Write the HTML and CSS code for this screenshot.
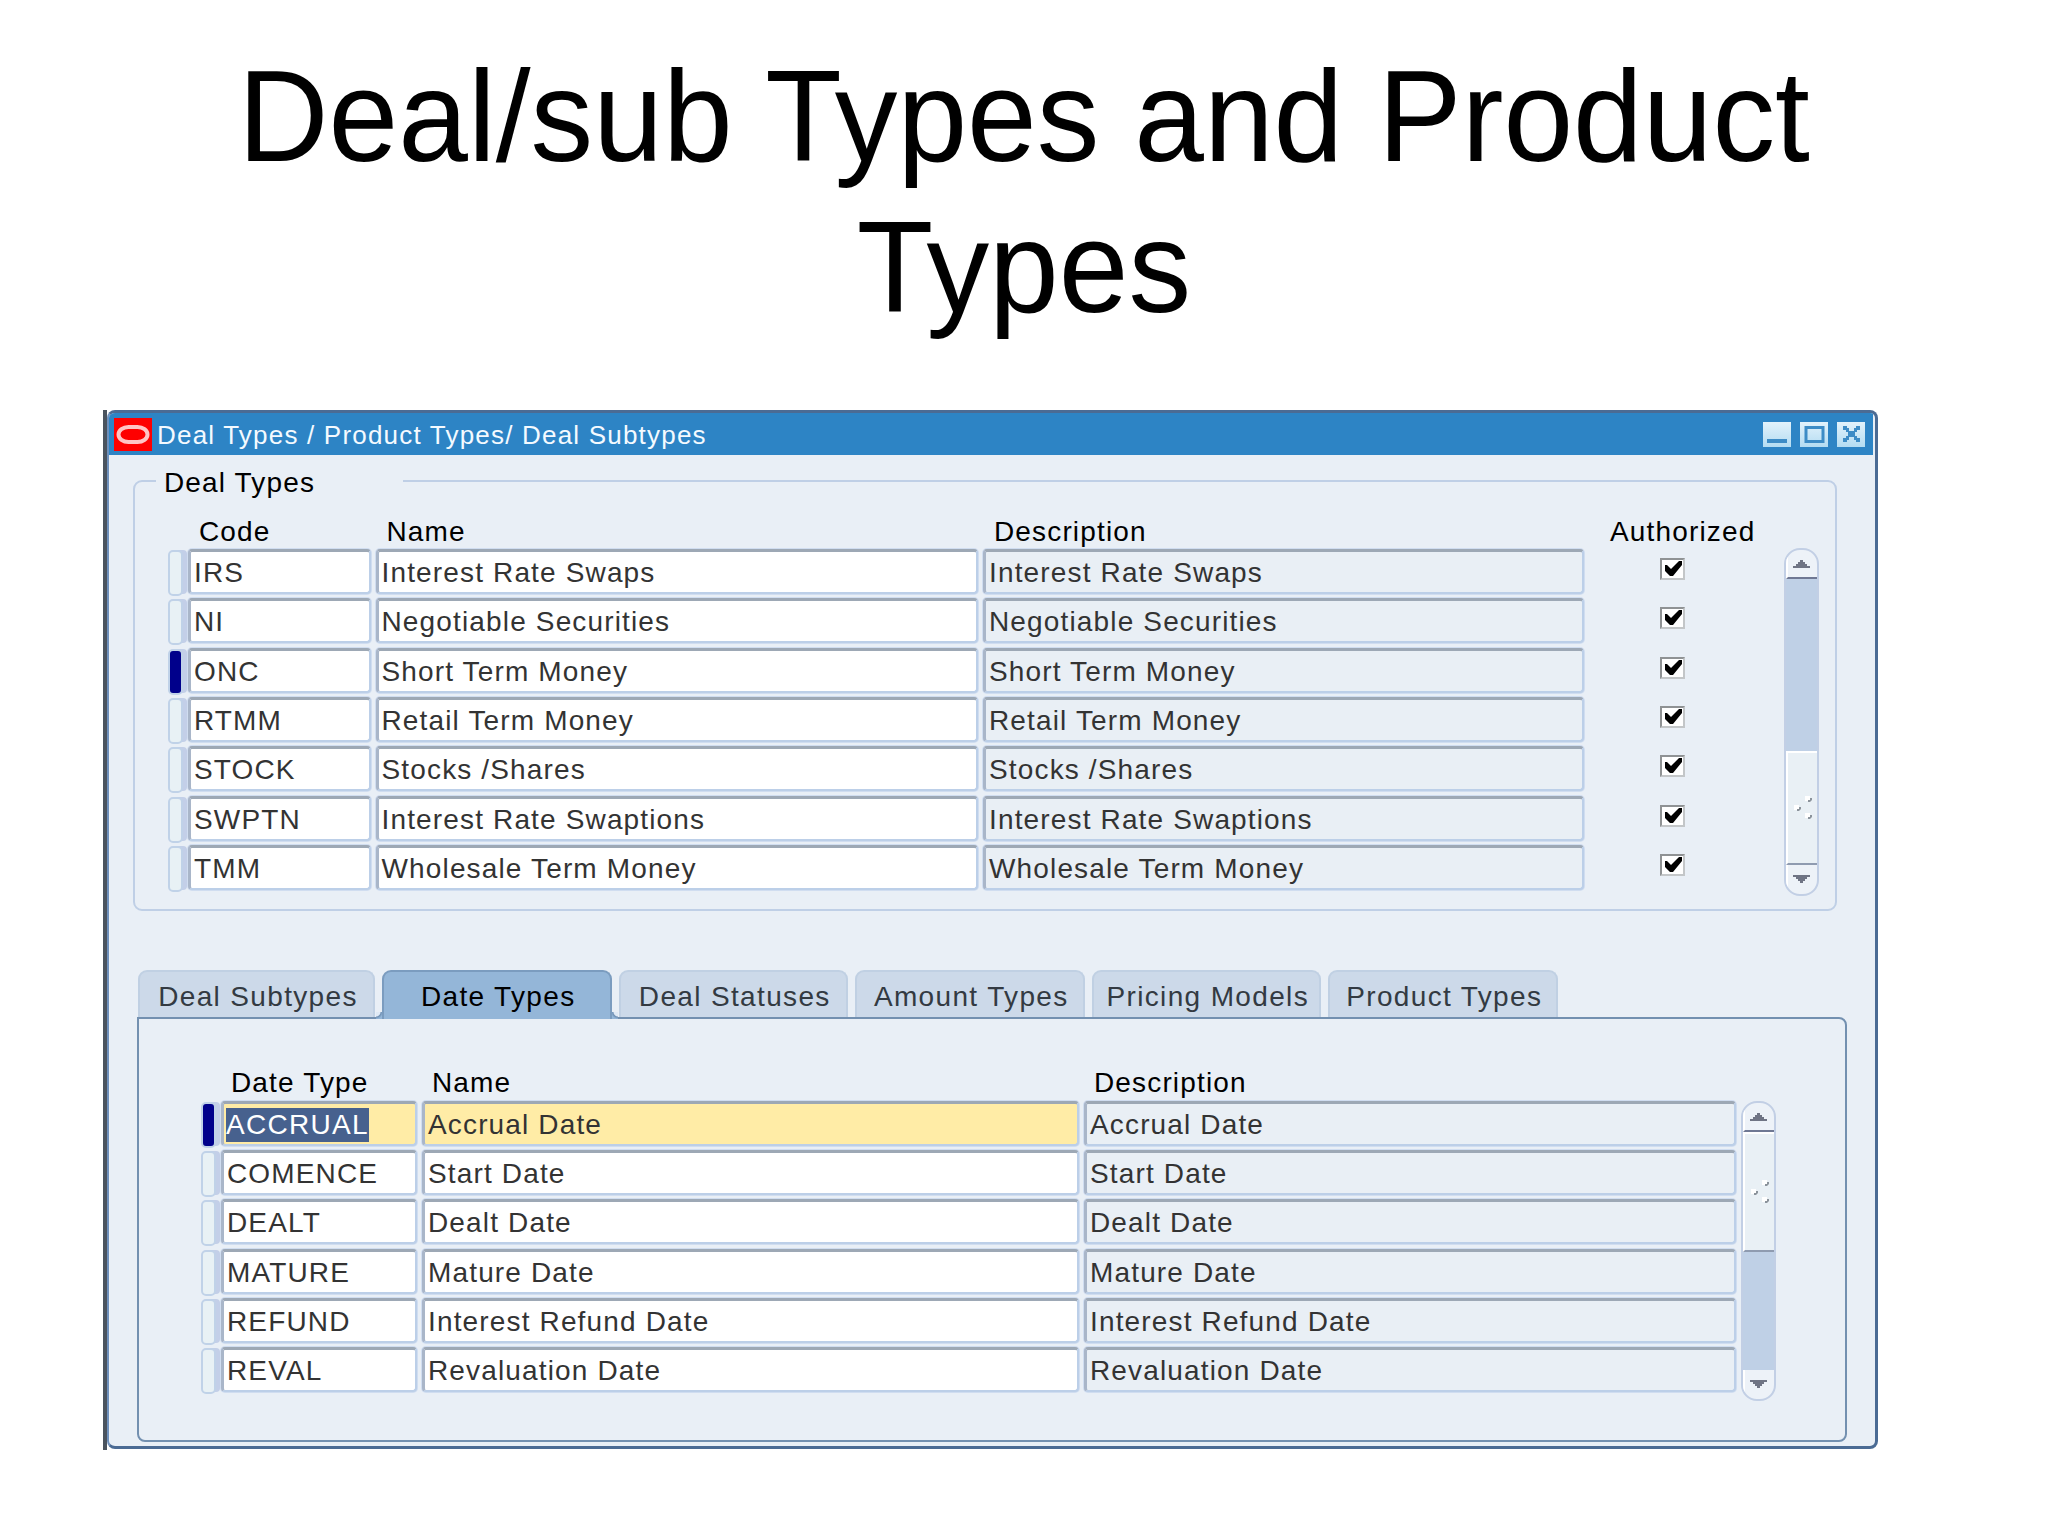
FILE: index.html
```
<!DOCTYPE html>
<html lang="en">
<head>
  <meta charset="UTF-8" />
  <title>Deal/sub Types and Product Types</title>
  <link rel="stylesheet" href="styles.css">
</head>
<body>

  <h1 class="slide-title">Deal/sub Types and Product<br>Types</h1>

  <div class="frame">
    <div class="window">
      <div class="titlebar">
        <svg class="logo" viewBox="0 0 38 33">
          <rect width="38" height="33" fill="#fe0000"/>
          <rect x="4.5" y="9" width="29" height="15" rx="10" ry="7.5" fill="none" stroke="#ffc4c4" stroke-width="4"/>
        </svg>
        <span class="caption">Deal Types / Product Types/ Deal Subtypes</span>
        <div class="win-buttons">
          <svg class="win-btn" viewBox="0 0 28 25"><rect x="4" y="17" width="20" height="4" fill="#3d8cc6"/></svg>
          <svg class="win-btn" viewBox="0 0 28 25"><rect x="6" y="5.5" width="17" height="14" fill="none" stroke="#3d8cc6" stroke-width="3"/></svg>
          <svg class="win-btn" viewBox="0 0 28 25"><path d="M6 4h4v2h2v3h5V6h2V4h4v4h-3v2h-2v4h2v2h3v4h-4v-2h-2v-3h-5v3h-2v2H6v-4h3v-2h2v-4H9V8H6z" fill="#3d8cc6"/></svg>
        </div>
      </div>

      <div class="group">
        <span class="legend">Deal Types</span>
        <div class="block deals">
          <div class="grid">
            <div class="row head"><span></span><span>Code</span><span>Name</span><span>Description</span><span class="auth">Authorized</span></div>
            <div class="row"><i class="mark"></i><div class="field">IRS</div><div class="field">Interest Rate Swaps</div><div class="field ro">Interest Rate Swaps</div><span class="check"><svg viewBox="0 0 17 15"><path d="M0 4h2l4 4 8-8h3v4l-9 11h-3l-5-5z"/></svg></span></div>
            <div class="row"><i class="mark"></i><div class="field">NI</div><div class="field">Negotiable Securities</div><div class="field ro">Negotiable Securities</div><span class="check"><svg viewBox="0 0 17 15"><path d="M0 4h2l4 4 8-8h3v4l-9 11h-3l-5-5z"/></svg></span></div>
            <div class="row"><i class="mark on"></i><div class="field">ONC</div><div class="field">Short Term Money</div><div class="field ro">Short Term Money</div><span class="check"><svg viewBox="0 0 17 15"><path d="M0 4h2l4 4 8-8h3v4l-9 11h-3l-5-5z"/></svg></span></div>
            <div class="row"><i class="mark"></i><div class="field">RTMM</div><div class="field">Retail Term Money</div><div class="field ro">Retail Term Money</div><span class="check"><svg viewBox="0 0 17 15"><path d="M0 4h2l4 4 8-8h3v4l-9 11h-3l-5-5z"/></svg></span></div>
            <div class="row"><i class="mark"></i><div class="field">STOCK</div><div class="field">Stocks /Shares</div><div class="field ro">Stocks /Shares</div><span class="check"><svg viewBox="0 0 17 15"><path d="M0 4h2l4 4 8-8h3v4l-9 11h-3l-5-5z"/></svg></span></div>
            <div class="row"><i class="mark"></i><div class="field">SWPTN</div><div class="field">Interest Rate Swaptions</div><div class="field ro">Interest Rate Swaptions</div><span class="check"><svg viewBox="0 0 17 15"><path d="M0 4h2l4 4 8-8h3v4l-9 11h-3l-5-5z"/></svg></span></div>
            <div class="row"><i class="mark"></i><div class="field">TMM</div><div class="field">Wholesale Term Money</div><div class="field ro">Wholesale Term Money</div><span class="check"><svg viewBox="0 0 17 15"><path d="M0 4h2l4 4 8-8h3v4l-9 11h-3l-5-5z"/></svg></span></div>
          </div>
          <div class="scroll">
            <div class="arrow up"><svg viewBox="0 0 17 8"><path d="M0 8V6h3V4h2V2h2V0h3v2h2v2h2v2h3v2z"/></svg></div>
            <div class="track"></div>
            <div class="thumb"><svg viewBox="0 0 18 24"><path d="M11 0h5v5h-5zM0 9h5v5H0zM11 17h5v5h-5z" fill="#fff"/><path d="M14 4h2V2h2v2l-2 2h-2zM3 13h2v-2h2v2l-2 2H3zM14 21h2v-2h2v2l-2 2h-2z" fill="#8b939b"/></svg></div>
            <div class="arrow down"><svg viewBox="0 0 17 8"><path d="M0 0v2h3v2h2v2h2v2h3V6h2V4h2V2h3V0z"/></svg></div>
          </div>
        </div>
      </div>

      <div class="tabs">
        <div class="tab">Deal Subtypes</div>
        <div class="tab active">Date Types</div>
        <div class="tab">Deal Statuses</div>
        <div class="tab">Amount Types</div>
        <div class="tab">Pricing Models</div>
        <div class="tab">Product Types</div>
      </div>

      <div class="panel">
        <div class="block dates">
          <div class="grid">
            <div class="row head"><span></span><span>Date Type</span><span>Name</span><span>Description</span></div>
            <div class="row current"><i class="mark on"></i><div class="field"><span class="selected">ACCRUAL</span></div><div class="field">Accrual Date</div><div class="field ro">Accrual Date</div></div>
            <div class="row"><i class="mark"></i><div class="field">COMENCE</div><div class="field">Start Date</div><div class="field ro">Start Date</div></div>
            <div class="row"><i class="mark"></i><div class="field">DEALT</div><div class="field">Dealt Date</div><div class="field ro">Dealt Date</div></div>
            <div class="row"><i class="mark"></i><div class="field">MATURE</div><div class="field">Mature Date</div><div class="field ro">Mature Date</div></div>
            <div class="row"><i class="mark"></i><div class="field">REFUND</div><div class="field">Interest Refund Date</div><div class="field ro">Interest Refund Date</div></div>
            <div class="row"><i class="mark"></i><div class="field">REVAL</div><div class="field">Revaluation Date</div><div class="field ro">Revaluation Date</div></div>
          </div>
          <div class="scroll">
            <div class="arrow up"><svg viewBox="0 0 17 8"><path d="M0 8V6h3V4h2V2h2V0h3v2h2v2h2v2h3v2z"/></svg></div>
            <div class="thumb"><svg viewBox="0 0 18 24"><path d="M11 0h5v5h-5zM0 9h5v5H0zM11 17h5v5h-5z" fill="#fff"/><path d="M14 4h2V2h2v2l-2 2h-2zM3 13h2v-2h2v2l-2 2H3zM14 21h2v-2h2v2l-2 2h-2z" fill="#8b939b"/></svg></div>
            <div class="track"></div>
            <div class="arrow down"><svg viewBox="0 0 17 8"><path d="M0 0v2h3v2h2v2h2v2h3V6h2V4h2V2h3V0z"/></svg></div>
          </div>
        </div>
      </div>
    </div>
  </div>

</body>
</html>
```
FILE: styles.css
```
* {
  box-sizing: border-box;
}

body {
  margin: 0;
  width: 2048px;
  height: 1536px;
  overflow: hidden;
  background: #fff;
  font-family: "Liberation Sans", Arial, sans-serif;
  color: #000;
}

.slide-title {
  margin: 0;
  padding-top: 40px;
  height: 410px;
  font-size: 125.3px;
  font-weight: normal;
  line-height: 144.6px;
  text-align: center;
  transform: scaleY(1.04);
  transform-origin: top;
}

.frame {
  margin-left: 103px;
  width: 1775px;
  height: 1040px;
  border-left: 4px solid #4a535e;
}

.window {
  height: 1039px;
  border: 3px solid #4b6b94;
  border-left: 2px solid #6e90bc;
  border-radius: 8px;
  background: #e9eff6;
  font-size: 28px;
  letter-spacing: 1.15px;
  overflow: hidden;
  white-space: nowrap;
}

/* title bar */
.titlebar {
  height: 42px;
  display: flex;
  align-items: center;
  padding: 0 8px 0 5px;
  margin-right: 2px;
  background: #2d84c5;
}

.logo {
  width: 38px;
  height: 33px;
}

.caption {
  margin-left: 5px;
  padding-top: 2px;
  font-size: 26px;
  letter-spacing: 1.2px;
  color: #f4faff;
}

.win-buttons {
  margin-left: auto;
  display: flex;
  gap: 9px;
}

.win-btn {
  width: 28px;
  height: 25px;
  background: linear-gradient(#e2f2fb, #b4dcf2);
}

/* Deal Types group */
.group {
  margin: 25px 0 0 24px;
  width: 1704px;
  height: 431px;
  border: 2px solid #bfcfe6;
  border-radius: 9px;
}

.legend {
  display: block;
  margin: -6px 0 0 21px;
  padding-left: 8px;
  width: 247px;
  height: 36px;
  line-height: 14px;
  background: #e9eff6;
}

.block {
  display: flex;
}

.row {
  display: grid;
  height: 45px;
  margin-bottom: 4.35px;
}

.deals {
  padding-left: 33px;
}

.deals .row {
  grid-template-columns: 20px 187.5px 607.5px 606px 190px;
}

.head {
  line-height: 39px;
  height: 36px;
  margin-bottom: 1px;
}

.head span {
  padding-left: 11px;
}

.deals .auth {
  padding-left: 21px;
}

.mark {
  width: 15px;
  height: 46px;
  margin-top: 1px;
  border: 2px solid #c0d2e8;
  border-radius: 5px;
  background: #e8f1f5;
  box-shadow: 5px -1px 0 -1px #c3cfe8;
}

.mark.on {
  background: #00008b;
}

.field {
  height: 45px;
  margin-right: 5px;
  padding-left: 3px;
  border: 2px solid #bccfe8;
  border-top: 3px solid #9da8b5;
  border-left: 3px solid #a9b6c9;
  border-radius: 4px;
  background: #fff;
  box-shadow: 0 0 0 1px #d0ddf0;
  line-height: 41px;
  color: #333;
}

.field.ro {
  background: #e9eff5;
}

.current .field:not(.ro) {
  background: #ffeca6;
}

.check {
  width: 25px;
  height: 22px;
  margin: 9px 0 0 71px;
  border: 2px solid #c3c6c8;
  border-top-color: #8f9294;
  border-left-color: #8f9294;
  background: #fff;
}

.check svg {
  display: block;
  width: 17px;
  height: 15px;
  margin: 1px 0 0 3px;
}

/* scroll bars */
.scroll {
  width: 35px;
  display: flex;
  flex-direction: column;
  border: 2px solid #c2cfe5;
  border-radius: 16px;
  background: #edf2f8;
  overflow: hidden;
}

.arrow {
  height: 29px;
  flex: none;
  display: flex;
  justify-content: center;
  border-left: 2px solid #fff;
}

.arrow svg {
  width: 17px;
  height: 8px;
  margin-left: -2px;
  fill: #6f7484;
}

.up {
  padding-top: 10px;
  border-bottom: 2px solid #6f7893;
}

.down {
  padding-top: 10px;
}

.track {
  flex: 1;
  background: #bfd0e6;
}

.thumb {
  display: flex;
  align-items: center;
  justify-content: center;
  border: 2px solid #fff;
  border-right: none;
  border-bottom: 2px solid #8f9bb0;
  background: #e9f0f5;
}

.thumb svg {
  width: 18px;
  height: 24px;
}

.deals .scroll {
  height: 348px;
  margin: 36px 0 0 5px;
}

.deals .thumb {
  height: 114px;
}

/* tabs */
.tabs {
  display: flex;
  gap: 7px;
  margin: 59px 0 0 29px;
}

.tab {
  width: 229.5px;
  height: 47px;
  padding-left: 3px;
  border: 2px solid #c0d0e3;
  border-bottom: none;
  border-radius: 9px 9px 0 0;
  background: #ccd9e9;
  line-height: 50px;
  letter-spacing: 1.35px;
  text-align: center;
  color: #333a42;
}

.tab:first-child {
  width: 237px;
}

.tab.active {
  position: relative;
  height: 49px;
  margin-bottom: -2px;
  border-color: #7b9cbf;
  background: #94b6d8;
  color: #000;
}

/* flared feet of the open tab */
.tab.active::before,
.tab.active::after {
  content: "";
  position: absolute;
  bottom: 0;
  width: 6px;
  height: 7px;
}

.tab.active::before {
  left: -8px;
  background: radial-gradient(circle at 0 0, #dfe9f5 4px, #6f90b4 5px, #94b6d8 7px);
}

.tab.active::after {
  right: -8px;
  background: radial-gradient(circle at 100% 0, #dfe9f5 4px, #6f90b4 5px, #94b6d8 7px);
}

.panel {
  margin-left: 28px;
  width: 1710px;
  height: 425px;
  border: 2px solid #7390b0;
  border-radius: 0 8px 8px 8px;
}

.dates {
  padding: 44px 0 0 62px;
}

.dates .row {
  grid-template-columns: 20px 201px 662px 657px;
}

.dates .head {
  margin-bottom: 1.5px;
}

.dates .head span {
  padding-left: 10px;
}

.dates .selected {
  display: inline-block;
  height: 34px;
  margin-left: -1px;
  line-height: 34px;
  letter-spacing: 1.3px;
  background: #47618e;
  color: #fff;
}

.dates .scroll {
  height: 300px;
  margin: 38px 0 0 0;
}

.dates .thumb {
  height: 120px;
}
```
